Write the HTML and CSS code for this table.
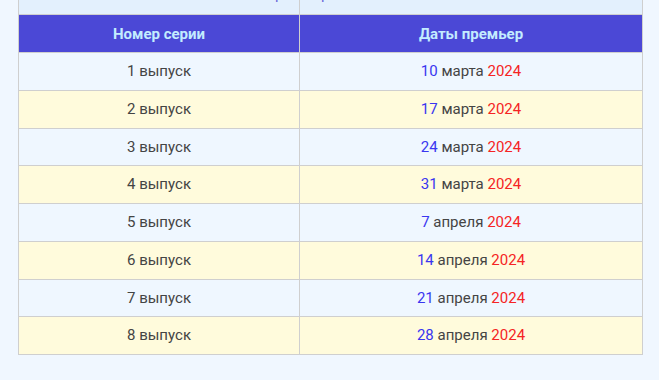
FILE: index.html
```html
<!DOCTYPE html>
<html lang="ru">
<head>
<meta charset="utf-8">
<link rel="stylesheet" href="styles.css">
</head>
<body>
<div class="wrap">
<table class="sched">
  <colgroup><col class="c1"><col class="c2"></colgroup>
  <thead>
    <tr class="top"><td><span class="cut cut-l">р</span></td><td><span class="cut cut-r">р</span></td></tr>
    <tr class="head"><th>Номер серии</th><th>Даты премьер</th></tr>
  </thead>
  <tbody>
    <tr class="odd"><td>1 выпуск</td><td><span class="d">10</span> марта <span class="y">2024</span></td></tr>
    <tr class="even"><td>2 выпуск</td><td><span class="d">17</span> марта <span class="y">2024</span></td></tr>
    <tr class="odd"><td>3 выпуск</td><td><span class="d">24</span> марта <span class="y">2024</span></td></tr>
    <tr class="even"><td>4 выпуск</td><td><span class="d">31</span> марта <span class="y">2024</span></td></tr>
    <tr class="odd"><td>5 выпуск</td><td><span class="d">7</span> апреля <span class="y">2024</span></td></tr>
    <tr class="even"><td>6 выпуск</td><td><span class="d">14</span> апреля <span class="y">2024</span></td></tr>
    <tr class="odd"><td>7 выпуск</td><td><span class="d">21</span> апреля <span class="y">2024</span></td></tr>
    <tr class="even"><td>8 выпуск</td><td><span class="d">28</span> апреля <span class="y">2024</span></td></tr>
  </tbody>
</table>
</div>
</body>
</html>
```
FILE: styles.css
```css
html, body {
  margin: 0;
  padding: 0;
  background: #f0f7ff;
}
body {
  font-family: Roboto, "Liberation Sans", sans-serif;
  width: 659px;
  height: 380px;
  overflow: hidden;
}
.wrap {
  padding: 0 17px 0 18px;
}
.sched {
  width: 624px;
  border-collapse: collapse;
  table-layout: fixed;
}
.c1 { width: 281px; }
.c2 { width: 343px; }
.sched td, .sched th {
  border: 1px solid #cfcfcf;
  text-align: center;
  font-size: 15px;
  line-height: 18px;
  padding: 9px 8px 9.75px;
  color: #444;
  font-weight: 400;
}
.sched .top td {
  background: #e3f0fd;
  height: 14px;
  padding: 0;
  position: relative;
  border-top: none;
  line-height: 14px;
}
.cut {
  position: absolute;
  top: -13px;
  font-size: 15px;
  line-height: 15px;
  color: #6b66d8;
}
.cut-l { left: 256px; }
.cut-r { left: 21px; }
.sched .head th {
  background: #4b48d6;
  color: #c3ecff;
  font-weight: 700;
  font-size: 15px;
  padding: 10px 8px 9px;
}
.odd td { background: #eff7ff; }
.even td { background: #fffbdc; }
.d { color: #3a36f0; }
.y { color: #f52424; }
```
